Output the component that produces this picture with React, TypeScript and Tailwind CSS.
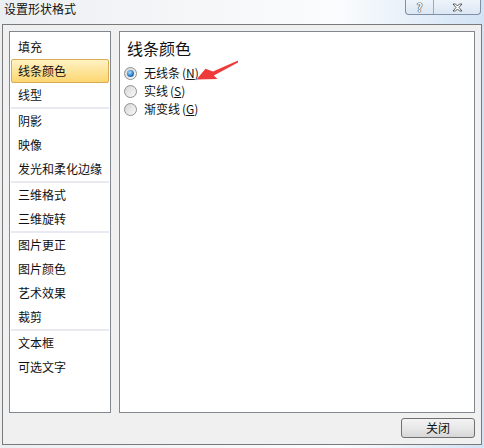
import { useState } from "react";

const font = "font-['Noto_Sans_CJK_SC','Noto_Sans',sans-serif]";

// left nav: null marks a divider line
const navItems: (string | null)[] = [
  "填充", "线条颜色", "线型", null,
  "阴影", "映像", "发光和柔化边缘", null,
  "三维格式", "三维旋转", null,
  "图片更正", "图片颜色", "艺术效果", "裁剪", null,
  "文本框", "可选文字",
];

const lineOptions = [
  { label: "无线条", key: "N" },
  { label: "实线", key: "S" },
  { label: "渐变线", key: "G" },
];

function Radio({ checked }: { checked: boolean }) {
  return (
    <span className="w-[13px] h-[13px] rounded-full border border-[#8e8f8f] bg-linear-to-br from-[#d6d6d6] to-[#fafafa] flex items-center justify-center shrink-0">
      {checked && (
        <span className="w-[7px] h-[7px] rounded-full bg-[radial-gradient(circle_at_40%_35%,#b4e0ff,#2a7cc4_55%,#0e4b88)]" />
      )}
    </span>
  );
}

export default function App() {
  const [active, setActive] = useState("线条颜色");
  const [line, setLine] = useState("N");

  return (
    <div className={`w-[484px] h-[448px] relative overflow-hidden bg-linear-to-r from-[#eceff2] via-[#fbfcfd] via-70% to-[#d2e3f5] text-[12px] text-[#111] ${font}`}>
      {/* title bar */}
      <div className="h-[24px] flex items-start">
        <span className="pl-[4px] leading-[18px] text-[12px] text-[#111]">设置形状格式</span>
        <div className="ml-auto mr-[3px] flex h-[15px] border border-t-0 border-[#7f8fa6] rounded-b-[4px] bg-linear-to-b from-[#eef4fb] to-[#dbe7f4]">
          <div className="w-[28px] flex items-center justify-center border-r border-[#9aa9bc]">
            <span className="text-white font-bold text-[11px] leading-[12px] [text-shadow:0_0_1px_#333,0_0_1px_#333,0_0_1px_#333]">?</span>
          </div>
          <div className="w-[46px] flex items-center justify-center">
            <svg width="11" height="9" viewBox="0 0 11 9">
              <path
                d="M1 1h2.5L5.5 3 7.5 1H10L7 4.5 10 8H7.5L5.5 6 3.5 8H1L4 4.5Z"
                fill="#fff"
                stroke="#3a3a3a"
                strokeWidth="0.8"
                strokeLinejoin="round"
              />
            </svg>
          </div>
        </div>
      </div>

      {/* dialog body */}
      <div className="mx-[2px] h-[421px] border border-[#7a7a7a] bg-[#f0f0f0] pt-[6px] px-[6px]">
        <div className="flex gap-[8px] h-[382px]">
          <div className="w-[102px] border border-[#828790] bg-white px-[1px] pt-[3px]">
            {navItems.map((item, i) =>
              item === null ? (
                <div key={i} className="h-[2px] bg-[#e9e9f2]" />
              ) : (
                <div
                  key={i}
                  onClick={() => setActive(item)}
                  className={
                    item === active
                      ? "h-[24px] flex items-center pl-[6px] border border-[#d8ad55] rounded-[2px] bg-linear-to-b from-[#fff2c2] to-[#fcd66f] whitespace-nowrap"
                      : "h-[24px] flex items-center pl-[7px] whitespace-nowrap"
                  }
                >
                  {item}
                </div>
              )
            )}
          </div>

          <div className="w-[356px] border border-[#828790] bg-white pl-[7px] pt-[6px] relative">
            <div className="text-[16px] leading-[20px] text-[#111]">线条颜色</div>
            <div className="mt-[6px]">
              {lineOptions.map((o) => (
                <div
                  key={o.key}
                  onClick={() => setLine(o.key)}
                  className="h-[18px] flex items-center gap-[7px] pl-[4px] -ml-[7px]"
                >
                  <Radio checked={line === o.key} />
                  <span className="whitespace-nowrap">
                    {o.label}
                    <span className="ml-[2px]">
                      (<span className="underline">{o.key}</span>)
                    </span>
                  </span>
                </div>
              ))}
            </div>
          </div>
        </div>

        <div className="flex justify-end mt-[5px]">
          <button className="w-[74px] h-[20px] border border-[#707070] rounded-[3px] bg-linear-to-b from-[#f3f3f3] via-[#e8e8e8] via-50% to-[#d6d6d6] text-[12px] leading-none text-[#111]">
            关闭
          </button>
        </div>
      </div>

      {/* red pointer arrow */}
      <svg className="absolute left-[190px] top-[55px]" width="50" height="30" viewBox="0 0 50 30">
        <polygon points="48,5.5 23,16.5 15.5,13.8 6.5,24.5 27.5,24 23.8,20.6 48,7.5" fill="#ef3a3a" />
      </svg>
    </div>
  );
}
